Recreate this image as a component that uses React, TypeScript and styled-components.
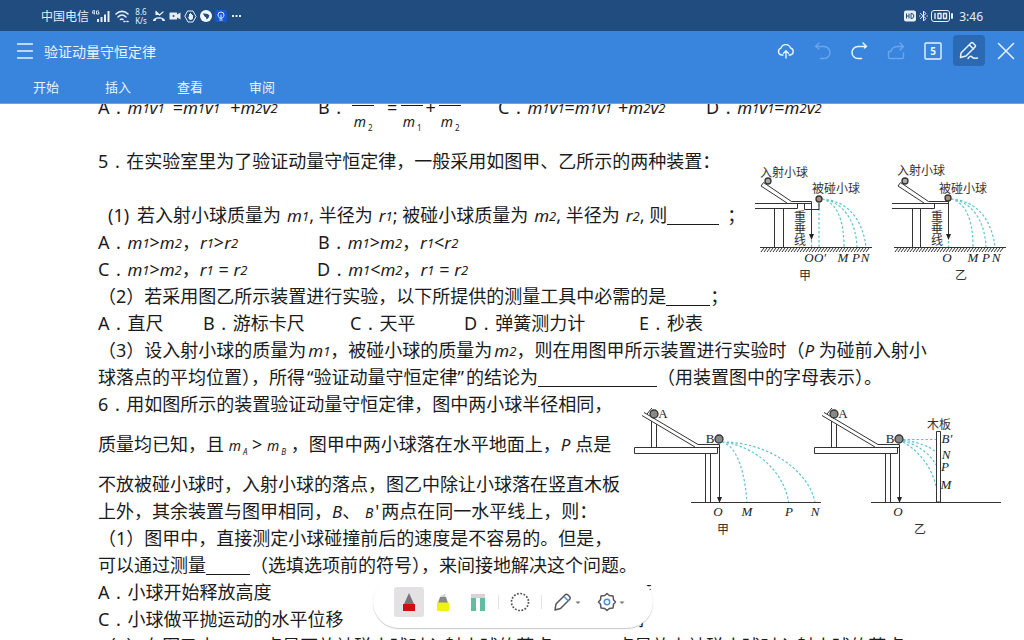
import React from "react";
import styled, { createGlobalStyle } from "styled-components";

const GlobalStyle = createGlobalStyle`
  * { box-sizing: border-box; }
  body {
    margin: 0;
    background: #fff;
    color: #1b1b1b;
    font-family: "Noto Sans", "Noto Sans CJK SC", sans-serif;
  }
  button { font: inherit; color: inherit; border: 0; padding: 0; background: none; }
`;

const Screen = styled.div`
  position: relative;
  display: flex;
  flex-direction: column;
  height: 100vh;
  overflow: hidden;
`;

/* ---------- status bar ---------- */

const StatusBar = styled.div`
  display: flex;
  flex: none;
  justify-content: space-between;
  align-items: center;
  height: 31px;
  padding: 1px 41px 0 41px;
  background: #204c80;
  color: #e6eef8;
  font-size: 12px;
`;

const StatusGroup = styled.div`
  display: flex;
  align-items: center;
  gap: 3px;
`;

const NetSpeed = styled.span`
  width: 16px;
  font-size: 8px;
  line-height: 9px;
  text-align: center;
`;

const Clock = styled.span`
  margin-left: 2px;
  font-family: "Noto Sans", sans-serif;
  font-size: 12px;
`;

/* ---------- header ---------- */

const Header = styled.header`
  position: relative;
  z-index: 1;
  flex: none;
  height: 73px;
  background: #3985dd;
  color: #e9f3ff;
  border-bottom: 1px solid #6aa3e6;
`;

const TitleRow = styled.div`
  display: flex;
  align-items: center;
  height: 39px;
  padding: 0 2px 0 17px;
`;

const Title = styled.h1`
  flex: 1;
  margin: 0 0 0 11px;
  font-size: 14px;
  font-weight: 400;
`;

const Actions = styled.div`
  display: flex;
  justify-content: space-between;
  width: 252px;
`;

const IconButton = styled.button<{ $active?: boolean }>`
  display: flex;
  align-items: center;
  justify-content: center;
  width: 32px;
  height: 31px;
  border-radius: 4px;
  background: ${(p) => (p.$active ? "#2c69b3" : "transparent")};
  &:disabled { color: #6aa6ea; }
`;

const MenuButton = styled.button`
  display: flex;
`;

const Tabs = styled.nav`
  display: flex;
  height: 33px;
  padding-left: 10px;
`;

const Tab = styled.button`
  width: 72px;
  font-size: 13px;
`;

/* ---------- document ---------- */

const Viewport = styled.main`
  flex: 1;
  min-height: 0;
  overflow: hidden;
`;

const Paper = styled.article`
  margin-top: -10px;
  padding-left: 98px;
  font-size: 18px;
  line-height: 27px;
  white-space: nowrap;
`;

const Line = styled.p<{ $before?: number; $indent?: number }>`
  height: 27px;
  margin: ${(p) => p.$before ?? 0}px 0 0;
  padding-left: ${(p) => p.$indent ?? 0}px;
`;

const Options = styled.div<{ $cols: string; $tall?: boolean }>`
  display: grid;
  grid-template-columns: ${(p) => p.$cols};
  height: ${(p) => (p.$tall ? 54 : 27)}px;
`;

const Split = styled.section`
  display: flex;
  align-items: flex-start;
`;

const TextColumn = styled.div<{ $width: number }>`
  flex: none;
  width: ${(p) => p.$width}px;
`;

const Figure = styled.svg<{ $top: number }>`
  flex: none;
  margin-top: ${(p) => p.$top}px;
`;

const Blank = styled.span<{ $width: number }>`
  display: inline-block;
  width: ${(p) => p.$width}px;
  height: 20px;
  border-bottom: 1px solid #1b1b1b;
  vertical-align: -3px;
`;

const Dot = styled.span`
  display: inline-block;
  width: 18px;
  text-align: center;
`;

const Letter = styled.i<{ $small?: boolean }>`
  font-size: ${(p) => (p.$small ? 14 : 17)}px;
  line-height: 1;
`;

const Index = styled.i`
  font-size: 13px;
  line-height: 1;
  vertical-align: 1px;
`;

const LowIndex = styled.span<{ $italic?: boolean }>`
  padding-left: 2px;
  font-size: 8px;
  font-style: ${(p) => (p.$italic ? "italic" : "normal")};
  line-height: 1;
  vertical-align: -4px;
`;

const Pad = styled.span<{ $width: number }>`
  display: inline-block;
  width: ${(p) => p.$width}px;
`;

const Equation = styled.span`
  display: inline-flex;
  align-items: flex-start;
  vertical-align: top;
`;

const Fraction = styled.span`
  display: inline-block;
  width: 22px;
  margin-top: 11px;
  border-top: 1px solid #1b1b1b;
  line-height: 28px;
  padding-left: 2px;
`;

const Operator = styled.span<{ $width: number }>`
  width: ${(p) => p.$width}px;
  text-align: center;
`;

const V = ({ c, n }: { c: string; n: string }) => (
  <>
    <Letter>{c}</Letter>
    <Index>{n}</Index>
  </>
);

const No = ({ children }: { children: string }) => (
  <>
    {children}
    <Dot>.</Dot>
  </>
);

const Den = ({ n }: { n: string }) => (
  <Fraction>
    <Letter $small>m</Letter>
    <LowIndex>{n}</LowIndex>
  </Fraction>
);

/* ---------- figures ---------- */

const Drawing = styled.g`
  fill: none;
  stroke: #333;
  stroke-width: 1;
`;

const Dashes = styled.g`
  fill: none;
  stroke: #5fc4cf;
  stroke-width: 1.2;
  stroke-dasharray: 2.5 2;
`;

const Caption = styled.text`
  font-family: "Noto Sans CJK SC", sans-serif;
  font-size: 12px;
  fill: #333;
`;

const Point = styled.text<{ $upright?: boolean }>`
  font-family: "Liberation Serif", serif;
  font-size: 13px;
  font-style: ${(p) => (p.$upright ? "normal" : "italic")};
  text-anchor: middle;
  fill: #222;
`;

const hatch = (from: number, to: number) => {
  let d = "";
  for (let x = from; x < to; x += 3) d += `M${x + 3} 248l-3 4`;
  return d;
};

const Ball = ({ x, y, r, fill }: { x: number; y: number; r: number; fill: string }) => (
  <circle cx={x} cy={y} r={r} fill={fill} stroke="#333" strokeWidth="1.3" />
);

const DropFigure = () => (
  <Figure $top={12} width="262" height="125" viewBox="750 160 262 125" role="img" aria-label="甲 乙">
    <Dashes>
      <path d="M811.5 240V247M819 204V247" />
      <path d="M822 199C838 203 844 222 844 247M822 199C844 202 856 222 857 247M822 199C850 201 863 222 866 247" />
      <path d="M948.500 241V247M951 199C967 203 973 222 973 247M951 199C973 202 985 222 986 247M951 199C979 201 992 222 995 247" />
    </Dashes>
    <Drawing>
      <path d="M755 203.500H812M755 208.500H797.500V204M804.500 204V209.500H819V203M774.500 209V247M783.500 209V247" />
      <path d="M787 203L761 186L763.500 182.500L791.500 201.500H811.500V236" />
      <path d="M892 203.500H948M892 208.500H934.500V204M912.500 209V247M920.500 209V247" />
      <path d="M924 203L898 186L900.500 182.500L928.500 201.500H948.500V236" />
      <path d="M760 247.500H872M894 247.500H1006" />
      <path d={hatch(761, 869) + hatch(895, 1003)} />
    </Drawing>
    <path d="M809 234H814L811.500 240ZM946 234H951L948.500 240Z" fill="#222" />
    <Ball x={768} y={181} r={3} fill="#aaa" />
    <Ball x={819} y={199} r={3} fill="#a98d78" />
    <Ball x={905} y={181} r={3} fill="#aaa" />
    <Ball x={948} y={198} r={3} fill="#a98d78" />
    <Caption x="760" y="177">入射小球</Caption>
    <Caption x="812" y="193">被碰小球</Caption>
    <Caption x="794" y="221">重</Caption>
    <Caption x="794" y="233">垂</Caption>
    <Caption x="794" y="245">线</Caption>
    <Caption x="897" y="175">入射小球</Caption>
    <Caption x="939" y="193">被碰小球</Caption>
    <Caption x="931" y="221">重</Caption>
    <Caption x="931" y="233">垂</Caption>
    <Caption x="931" y="245">线</Caption>
    <Point x="809" y="262">O</Point>
    <Point x="820" y="262">O′</Point>
    <Point x="843" y="262">M</Point>
    <Point x="856" y="262">P</Point>
    <Point x="865" y="262">N</Point>
    <Point x="947" y="262">O</Point>
    <Point x="973" y="262">M</Point>
    <Point x="986" y="262">P</Point>
    <Point x="996" y="262">N</Point>
    <Caption x="799" y="280">甲</Caption>
    <Caption x="955" y="280">乙</Caption>
  </Figure>
);

const Ramp = ({ dx }: { dx: number }) => (
  <g transform={`translate(${dx} 0)`}>
    <Drawing>
      <path d="M634.500 447.500H717.500V453.500H634.500ZM705.500 454V502M710.500 454V502M651.500 421V447M656.500 424V447" />
      <path d="M644 412.500L698 444.500H719.500V498M642 415.500L695 447M719 447.500H695M647 414L652 408" />
      <path d="M691 502.500H821" />
    </Drawing>
    <path d="M717 497H722L719.500 503Z" fill="#222" />
    <Ball x={654} y={414} r={4} fill="#888" />
    <Ball x={719} y={439} r={4} fill="#888" />
    <Point $upright x="663" y="418">A</Point>
    <Point $upright x="710" y="443">B</Point>
    <Point x="718" y="516">O</Point>
  </g>
);

const RampFigure = () => (
  <Figure $top={9} width="376" height="140" viewBox="630 400 376 140" role="img" aria-label="甲 乙">
    <Dashes>
      <path d="M722 442C738 446 745 475 747 502M722 442C758 446 785 475 788.500 502M722 442C768 442 808 470 815 502" />
      <path d="M903 439.500H936M903 440C917 442 929 446 936 452M903 441C919 445 931 455 936 465M903 442C921 452 932 469 936 486" />
    </Dashes>
    <Ramp dx={0} />
    <Ramp dx={180} />
    <Drawing>
      <path d="M936.500 431.500H940.500V502H936.500Z" />
    </Drawing>
    <Point x="747" y="516">M</Point>
    <Point x="789" y="516">P</Point>
    <Point x="815" y="516">N</Point>
    <Caption x="717" y="534">甲</Caption>
    <Caption x="927" y="429">木板</Caption>
    <Point x="947" y="443">B′</Point>
    <Point x="946" y="459">N</Point>
    <Point x="945" y="471">P</Point>
    <Point x="946" y="489">M</Point>
    <Caption x="914" y="534">乙</Caption>
  </Figure>
);

/* ---------- pen toolbar ---------- */

const PenBar = styled.div`
  position: absolute;
  bottom: 12px;
  left: 50%;
  display: flex;
  align-items: center;
  width: 280px;
  height: 52px;
  margin-left: -139px;
  padding-left: 21px;
  border-radius: 26px;
  background: #fff;
  box-shadow: 0 1px 1px rgba(0, 0, 0, 0.22);
`;

const PenButton = styled.button<{ $active?: boolean; $width?: number }>`
  display: flex;
  align-items: center;
  justify-content: center;
  width: ${(p) => p.$width ?? 34}px;
  height: 30px;
  border-radius: 3px;
  background: ${(p) => (p.$active ? "#e4e1e5" : "transparent")};
`;

const Divider = styled.span`
  width: 1px;
  height: 14px;
  margin: 0 4px;
  background: #e2e2e2;
`;

const line = { fill: "none", stroke: "currentColor", strokeLinecap: "round", strokeLinejoin: "round" } as const;

export default function App() {
  return (
    <Screen>
      <GlobalStyle />
      <StatusBar>
        <StatusGroup>
          <span>中国电信</span>
          <svg width="19" height="14" viewBox="0 0 19 14" fill="#e6eef8">
            <path d="M1.500 1L0 4H3M2.300 1V5.500M7 2H4.500V5H7V3.500H6" fill="none" stroke="#e6eef8" strokeWidth="0.900" />
            <path d="M5 10h2v3H5zM8.500 8h2v5h-2zM12 5.500h2V13h-2zM15.500 2h2v11h-2z" />
          </svg>
          <svg width="16" height="14" viewBox="0 0 16 14" {...line} strokeWidth="1.600">
            <path d="M2 5C5.500 1.500 10.500 1.500 14 5M4 8C6.500 5.500 9.500 5.500 12 8M6.500 10.500Q8 9.500 9 10.500" />
            <path d="M10 12.500h1M13 12.500h1" />
          </svg>
          <NetSpeed>8.6 K/s</NetSpeed>
          <svg width="14" height="14" viewBox="0 0 14 14">
            <path d="M4 2.500V5.500H6.500M4 2.500L7.500 6L11 3" {...line} strokeWidth="1.200" />
            <path d="M1 12C1 7 13 7 13 12L10.500 12L9.500 9.800H4.500L3.500 12Z" fill="#e6eef8" />
          </svg>
          <svg width="12" height="12" viewBox="0 0 12 12">
            <path d="M1 2.500H8V4.500L11.500 2.500V9.500L8 7.500V9.500H0.500V3Z" fill="#e6eef8" />
            <circle cx="4.500" cy="6" r="1" fill="#204c80" />
          </svg>
          <svg width="13" height="13" viewBox="0 0 13 13">
            <path d="M4 1H9L12 6.500L9 12H4L1 6.500Z" {...line} />
            <path d="M4 6.500L5 7V4H6V3H7V4H8V5H9V8Q9 10 6.500 10Q5 10 4 6.500Z" fill="#e6eef8" />
          </svg>
          <svg width="12" height="12" viewBox="0 0 12 12">
            <circle cx="6" cy="6" r="6" fill="#f2f7ff" />
            <path d="M3 3.500Q8 3 9.500 5.500Q9 8 6.500 9.500L6 7.500Q4 6.500 3 3.500Z" fill="#204c80" />
          </svg>
          <svg width="12" height="12" viewBox="0 0 12 12">
            <rect width="12" height="12" rx="2" fill="#1556d8" />
            <path d="M4.500 8Q3 6.500 3 5A3 3 0 0 1 9 5Q9 6.500 7.500 8ZM4.800 10H7.200M6 5V8" {...line} />
          </svg>
          <svg width="12" height="4" viewBox="0 0 12 4" fill="#e6eef8">
            <path d="M2 1h2v2H2zM5.500 1h2v2h-2zM9 1h2v2H9z" />
          </svg>
        </StatusGroup>
        <StatusGroup>
          <svg width="12" height="12" viewBox="0 0 12 12">
            <rect y="0.500" width="12" height="11" rx="2" fill="#e6eef8" />
            <path d="M2.500 3.500V8.500M5 3.500V8.500M2.500 6H5M7 3.500V8.500H8Q9.800 8 9.800 6Q9.800 4 8 3.500Z" fill="none" stroke="#204c80" />
          </svg>
          <svg width="9" height="14" viewBox="0 0 9 14" {...line}>
            <path d="M1.500 4.500L7 9.500L4.500 12V2L7 4.500L1.500 9.500M0.500 7H1M8 7H8.500" />
          </svg>
          <svg width="23" height="12" viewBox="0 0 23 12" {...line}>
            <rect x="0.500" y="0.500" width="18" height="11" rx="2.500" />
            <path d="M21 4V8" strokeWidth="2" />
            <path d="M4 3.500V8.500M7 3.500h3v5H7zM12.500 3.500h3v5h-3z" strokeWidth="1.400" />
          </svg>
          <Clock>3:46</Clock>
        </StatusGroup>
      </StatusBar>

      <Header>
        <TitleRow>
          <MenuButton aria-label="菜单">
            <svg width="16" height="18" viewBox="0 0 16 18" {...line}>
              <path d="M0.500 2H15.500M0.500 9H15.500M0.500 16H15.500" strokeWidth="1.400" />
            </svg>
          </MenuButton>
          <Title>验证动量守恒定律</Title>
          <Actions>
            <IconButton aria-label="上传">
              <svg width="18" height="18" viewBox="0 0 18 18" {...line} strokeWidth="1.400">
                <path d="M6 13H4.500A3.500 3.500 0 0 1 4 6.200A5 5 0 0 1 13.500 6A3.600 3.600 0 0 1 13.500 13H12M9 16V9M6.500 11.300L9 8.800L11.500 11.300" />
              </svg>
            </IconButton>
            <IconButton aria-label="撤销" disabled>
              <svg width="18" height="18" viewBox="0 0 18 18" {...line} strokeWidth="1.400">
                <path d="M5 1L1.500 4.500L5 7M1.500 4.500H10A6 6 0 0 1 10 16.500H6.500" />
              </svg>
            </IconButton>
            <IconButton aria-label="重做">
              <svg width="18" height="18" viewBox="0 0 18 18" {...line} strokeWidth="1.500">
                <path d="M13 1L16.500 4.500H8A6 6 0 0 0 8 16.500H11.500M16.500 4.500L14.500 6" />
              </svg>
            </IconButton>
            <IconButton aria-label="分享" disabled>
              <svg width="18" height="18" viewBox="0 0 18 18" {...line} strokeWidth="1.400">
                <path d="M13 1L16.500 4.500L13 8M16.500 4.500H11Q5 4.500 4 9.500H1.500V15Q1.500 16.500 3 16.500H15Q16.500 16.500 16.500 15V11" />
              </svg>
            </IconButton>
            <IconButton aria-label="页面">
              <svg width="18" height="18" viewBox="0 0 18 18" {...line}>
                <rect x="1" y="1" width="16" height="16" rx="1" strokeWidth="1.400" />
                <text x="9" y="13" fontSize="10" fontWeight="700" textAnchor="middle" fill="currentColor" stroke="none">5</text>
              </svg>
            </IconButton>
            <IconButton aria-label="编辑" $active>
              <svg width="20" height="20" viewBox="0 0 20 20" {...line} strokeWidth="1.500">
                <path d="M2 12L12 2Q13 1 14 2L16 4Q17 5 16 6L7 15L1.500 16.500ZM10.500 4L14.500 8" />
                <path d="M9 17.500Q11.500 14 13 16T18.500 17" />
              </svg>
            </IconButton>
            <IconButton aria-label="关闭">
              <svg width="18" height="18" viewBox="0 0 18 18" {...line} strokeWidth="1.500">
                <path d="M1.500 1.500L16.500 16.500M16.500 1.500L1.500 16.500" />
              </svg>
            </IconButton>
          </Actions>
        </TitleRow>
        <Tabs>
          {["开始", "插入", "查看", "审阅"].map((t) => (
            <Tab key={t}>{t}</Tab>
          ))}
        </Tabs>
      </Header>

      <Viewport>
        <Paper>
          <Options $cols="220px 180px 208px auto" $tall>
            <span><No>A</No><V c="m" n="1" /><V c="v" n="1" /><Pad $width={8} />=<V c="m" n="1" /><V c="v" n="1" /><Pad $width={10} />+<V c="m" n="2" /><V c="v" n="2" /></span>
            <Equation>
              <span><No>B</No></span>
              <Pad $width={4} />
              <Den n="2" />
              <Pad $width={10} />
              <Operator $width={17}>=</Operator>
              <Den n="1" />
              <Operator $width={16}>+</Operator>
              <Den n="2" />
            </Equation>
            <span><No>C</No><V c="m" n="1" /><V c="v" n="1" />=<V c="m" n="1" /><V c="v" n="1" /><Pad $width={6} />+<V c="m" n="2" /><V c="v" n="2" /></span>
            <span><No>D</No><V c="m" n="1" /><V c="v" n="1" />=<V c="m" n="2" /><V c="v" n="2" /></span>
          </Options>
          <Split>
            <TextColumn $width={652}>
              <Line><No>5</No>在实验室里为了验证动量守恒定律，一般采用如图甲、乙所示的两种装置：</Line>
              <Line $before={27} $indent={10}>
                (1)<Pad $width={8} />若入射小球质量为<Pad $width={6} /><V c="m" n="1" />, 半径为<Pad $width={6} /><V c="r" n="1" />; 被碰小球质量为<Pad $width={6} /><V c="m" n="2" />, 半径为<Pad $width={6} /><V c="r" n="2" />, 则<Blank $width={52} /><Pad $width={8} />；
              </Line>
              <Options $cols="220px auto">
                <span><No>A</No><V c="m" n="1" />&gt;<V c="m" n="2" />，<V c="r" n="1" />&gt;<V c="r" n="2" /></span>
                <span><No>B</No><V c="m" n="1" />&gt;<V c="m" n="2" />，<V c="r" n="1" />&lt;<V c="r" n="2" /></span>
              </Options>
              <Options $cols="219px auto">
                <span><No>C</No><V c="m" n="1" />&gt;<V c="m" n="2" />，<V c="r" n="1" /> = <V c="r" n="2" /></span>
                <span><No>D</No><V c="m" n="1" />&lt;<V c="m" n="2" />，<V c="r" n="1" /> = <V c="r" n="2" /></span>
              </Options>
              <Line>（2）若采用图乙所示装置进行实验，以下所提供的测量工具中必需的是<Blank $width={44} />；</Line>
              <Options $cols="105px 147px 114px 175px auto">
                <span><No>A</No>直尺</span>
                <span><No>B</No>游标卡尺</span>
                <span><No>C</No>天平</span>
                <span><No>D</No>弹簧测力计</span>
                <span><No>E</No>秒表</span>
              </Options>
            </TextColumn>
            <DropFigure />
          </Split>
          <Line>
            （3）设入射小球的质量为<Pad $width={2} /><V c="m" n="1" />，被碰小球的质量为<Pad $width={2} /><V c="m" n="2" />，则在用图甲所示装置进行实验时（<Letter>P</Letter> 为碰前入射小
          </Line>
          <Line>
            球落点的平均位置），所得<Pad $width={2} />“验证动量守恒定律”<Pad $width={2} />的结论为<Blank $width={119} />（用装置图中的字母表示）。
          </Line>
          <Split>
            <TextColumn $width={532}>
              <Line><No>6</No>用如图所示的装置验证动量守恒定律，图中两小球半径相同，</Line>
              <Line $before={13}>
                质量均已知，且 <Letter $small>m</Letter><LowIndex $italic>A</LowIndex> &gt; <Letter $small>m</Letter><LowIndex $italic>B</LowIndex> ，图甲中两小球落在水平地面上，<Letter>P</Letter> 点是
              </Line>
              <Line $before={13}>不放被碰小球时，入射小球的落点，图乙中除让小球落在竖直木板</Line>
              <Line>上外，其余装置与图甲相同，<Letter>B</Letter>、 <Letter $small>B</Letter><Pad $width={2} />'<Pad $width={2} />两点在同一水平线上，则：</Line>
              <Line>（1）图甲中，直接测定小球碰撞前后的速度是不容易的。但是，</Line>
              <Line>可以通过测量<Blank $width={44} />（选填选项前的符号），来间接地解决这个问题。</Line>
            </TextColumn>
            <RampFigure />
          </Split>
          <Options $cols="326px auto">
            <span><No>A</No>小球开始释放高度</span>
            <span><No>B</No>小球抛出点距地面的高度</span>
          </Options>
          <Options $cols="335px auto">
            <span><No>C</No>小球做平抛运动的水平位移</span>
            <span><No>D</No>小球做平抛运动的时间</span>
          </Options>
          <Line>
            （2）在图乙中<Blank $width={48} />点是不放被碰小球时入射小球的落点<Blank $width={64} />点是放上被碰小球时入射小球的落点
          </Line>
        </Paper>
      </Viewport>

      <PenBar role="toolbar">
        <PenButton $active $width={30} aria-label="红笔">
          <svg width="14" height="20" viewBox="0 0 14 20">
            <path d="M7 1L12 12H2Z" fill="#77777b" />
            <path d="M1 12H13V19H1Z" fill="#d40b12" />
          </svg>
        </PenButton>
        <PenButton $width={38} aria-label="荧光笔">
          <svg width="14" height="20" viewBox="0 0 14 20">
            <path d="M4.500 4L9.500 1.500V6H4.500Z" fill="#d4d4d4" />
            <path d="M4 5H10L12 11H2Z" fill="#88888c" />
            <path d="M1 10.500H13V19H1Z" fill="#eef315" />
          </svg>
        </PenButton>
        <PenButton $width={32} aria-label="橡皮">
          <svg width="16" height="20" viewBox="0 0 16 20">
            <path d="M1 2H15V6H1Z" fill="#d7d4d6" />
            <path d="M1 6H6V19H1ZM10 6H15V19H10Z" fill="#62bda0" />
          </svg>
        </PenButton>
        <Divider />
        <PenButton aria-label="套索">
          <svg width="20" height="20" viewBox="0 0 20 20">
            <circle cx="10" cy="10" r="8.500" fill="none" stroke="#555" strokeWidth="1.700" strokeDasharray="1.800 1.540" />
          </svg>
        </PenButton>
        <Divider />
        <PenButton $width={42} aria-label="笔形">
          <svg width="28" height="20" viewBox="0 0 28 20" fill="none" stroke="#55565a" strokeWidth="1.500" strokeLinejoin="round">
            <path d="M3 12L12 3Q13.500 1.500 15 3L16.500 4.500Q18 6 16.500 7.500L7.500 16.500L2 18Z" />
            <path d="M11 4.500L15.500 9" stroke="#4c8fe0" />
            <path d="M22.500 9.500H27.500L25 12Z" fill="#777" stroke="none" />
          </svg>
        </PenButton>
        <PenButton $width={46} aria-label="设置">
          <svg width="28" height="20" viewBox="0 0 28 20" fill="none" stroke="#55565a" strokeWidth="1.500" strokeLinejoin="round">
            <path d="M10 1.500L12.300 3.500L16 4L16.500 7.700L18.500 10L16.500 12.300L16 16L12.300 16.500L10 18.500L7.700 16.500L4 16L3.500 12.300L1.500 10L3.500 7.700L4 4L7.700 3.500Z" />
            <circle cx="10" cy="10" r="2.700" stroke="#4c8fe0" />
            <path d="M22.500 9.500H27.500L25 12Z" fill="#777" stroke="none" />
          </svg>
        </PenButton>
      </PenBar>
    </Screen>
  );
}
